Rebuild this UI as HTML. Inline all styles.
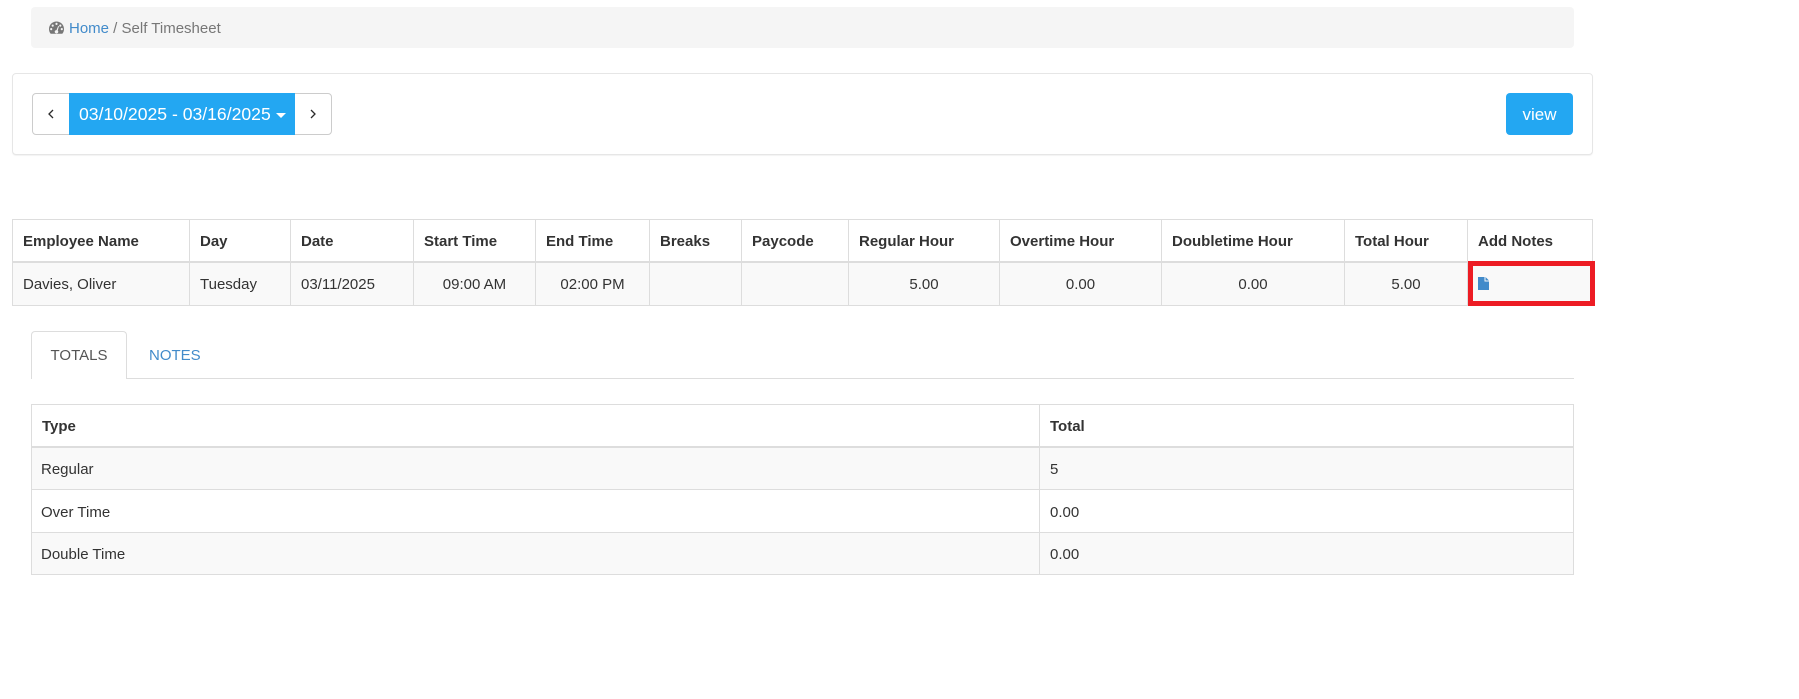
<!DOCTYPE html>
<html><head><meta charset="utf-8"><title>Self Timesheet</title>
<style>
html,body{margin:0;padding:0;background:#fff;width:1799px;height:699px;overflow:hidden}
body{font-family:"Liberation Sans",Arial,sans-serif;font-size:15px;color:#333;position:relative}
.abs{position:absolute;box-sizing:border-box}
.crumb{left:31px;top:7px;width:1543px;height:41px;background:#f5f5f5;border-radius:4px;line-height:43px;padding-left:18px;color:#777}
.crumb a{color:#428bca;text-decoration:none}
.panel{left:12px;top:73px;width:1581px;height:82px;border:1px solid #e6e6e6;border-radius:4px;box-shadow:0 1px 1px rgba(0,0,0,.05);background:#fff}
.grp{left:32px;top:93px;width:300px;height:42px;border:1px solid #ccc;border-radius:4px;background:#fff}
.blue{left:69px;top:93px;width:226px;height:42px;background:#23a7f2;color:#fff;font-size:17.6px;line-height:42px;padding-left:10px;white-space:nowrap}
.caret{display:inline-block;width:0;height:0;border-left:5px solid transparent;border-right:5px solid transparent;border-top:5px solid #fff;vertical-align:middle;margin-left:0}
.view{left:1506px;top:93px;width:67px;height:42px;background:#23a7f2;border-radius:4px;color:#fff;font-size:17px;line-height:44px;text-align:center}
table{border-collapse:collapse;table-layout:fixed;position:absolute}
th,td{border:1px solid #ddd;padding:2px 10px 0;box-sizing:border-box;text-align:left;overflow:hidden;white-space:nowrap}
th{font-weight:bold;border-bottom:2px solid #ddd}
.c{text-align:center}
.s td{background:#f9f9f9}
#t1{left:12px;top:219px;width:1580px}
#t1 th{height:42px}#t1 td{height:44px}
#t2{left:31px;top:404px;width:1542px}
#t2 th{height:42px}#t2 td{height:43px}
#t2 tr:last-child td{height:42px}
#t2 td:first-child{padding-left:9px}
.tabline{left:31px;top:378px;width:1543px;height:1px;background:#ddd}
.tab{left:31px;top:331px;width:96px;height:48px;border:1px solid #ddd;border-bottom:0;border-radius:4px 4px 0 0;background:#fff;line-height:47px;text-align:center;color:#555}
.tab2{left:149px;top:331px;height:48px;line-height:50px;color:#428bca}
.red{left:1468px;top:261px;width:127px;height:45px;border:5px solid #ed1c24}
</style></head><body>
<div class="abs crumb"><svg width="15" height="13" viewBox="0 0 15 13" style="vertical-align:-1px;margin-right:5px"><path fill="#777" fill-rule="evenodd" d="M7.5 0.5C3.4 0.5 0 3.8 0 8c0 1.7 .5 3.2 1.4 4.4.2.3.4.4.7.4h10.8c.3 0 .5-.1.7-.4C14.5 11.2 15 9.700 15 8c0-4.200-3.400-7.500-7.500-7.500zM7.500 1.800a1.100 1.100 0 1 1 0 2.200 1.100 1.100 0 0 1 0-2.200zM3.700 3.500a1.100 1.100 0 1 1 0 2.200 1.100 1.100 0 0 1 0-2.200zM11.300 3.500a1.100 1.100 0 1 1 0 2.200 1.100 1.100 0 0 1 0-2.200zM2.200 7a1.100 1.100 0 1 1 0 2.200A1.100 1.100 0 0 1 2.200 7zM12.800 7a1.100 1.100 0 1 1 0 2.200 1.100 1.100 0 0 1 0-2.200zM9.200 5l.8.300-1.300 4.200c.4.300.6.800.6 1.300 0 .9-.8 1.700-1.800 1.700s-1.800-.8-1.800-1.700c0-1 .8-1.700 1.800-1.700z"/></svg><a href="#">Home</a> / Self Timesheet</div>
<div class="abs panel"></div>
<div class="abs grp"></div>
<svg class="abs" style="left:46px;top:107px" width="10" height="14" viewBox="0 0 10 14"><path d="M7 3 3 7l4 4" fill="none" stroke="#2b2b2b" stroke-width="1.300"/></svg>
<div class="abs blue">03/10/2025 - 03/16/2025 <span class="caret"></span></div>
<svg class="abs" style="left:308px;top:107px" width="10" height="14" viewBox="0 0 10 14"><path d="M3 3l4 4-4 4" fill="none" stroke="#2b2b2b" stroke-width="1.300"/></svg>
<div class="abs view">view</div>
<table id="t1">
<colgroup><col style="width:177px"><col style="width:101px"><col style="width:123px"><col style="width:122px"><col style="width:114px"><col style="width:92px"><col style="width:107px"><col style="width:151px"><col style="width:162px"><col style="width:183px"><col style="width:123px"><col style="width:125px"></colgroup>
<thead><tr><th>Employee Name</th><th>Day</th><th>Date</th><th>Start Time</th><th>End Time</th><th>Breaks</th><th>Paycode</th><th>Regular Hour</th><th>Overtime Hour</th><th>Doubletime Hour</th><th>Total Hour</th><th>Add Notes</th></tr></thead>
<tbody><tr class="s"><td>Davies, Oliver</td><td>Tuesday</td><td>03/11/2025</td><td class="c">09:00 AM</td><td class="c">02:00 PM</td><td></td><td></td><td class="c">5.00</td><td class="c">0.00</td><td class="c">0.00</td><td class="c">5.00</td><td></td></tr></tbody>
</table>
<svg class="abs" style="left:1478px;top:277px" width="11" height="13" viewBox="0 0 11 13"><path fill="#428bca" d="M0 0h6.500v4.500H11V13H0z"/><path fill="#428bca" d="M7.500 0 11 3.500H7.500z"/></svg>
<div class="abs red"></div>
<div class="abs tabline"></div>
<div class="abs tab">TOTALS</div>
<div class="abs tab2">NOTES</div>
<table id="t2">
<colgroup><col style="width:1008px"><col style="width:534px"></colgroup>
<thead><tr><th>Type</th><th>Total</th></tr></thead>
<tbody><tr class="s"><td>Regular</td><td>5</td></tr><tr><td>Over Time</td><td>0.00</td></tr><tr class="s"><td>Double Time</td><td>0.00</td></tr></tbody>
</table>
</body></html>
